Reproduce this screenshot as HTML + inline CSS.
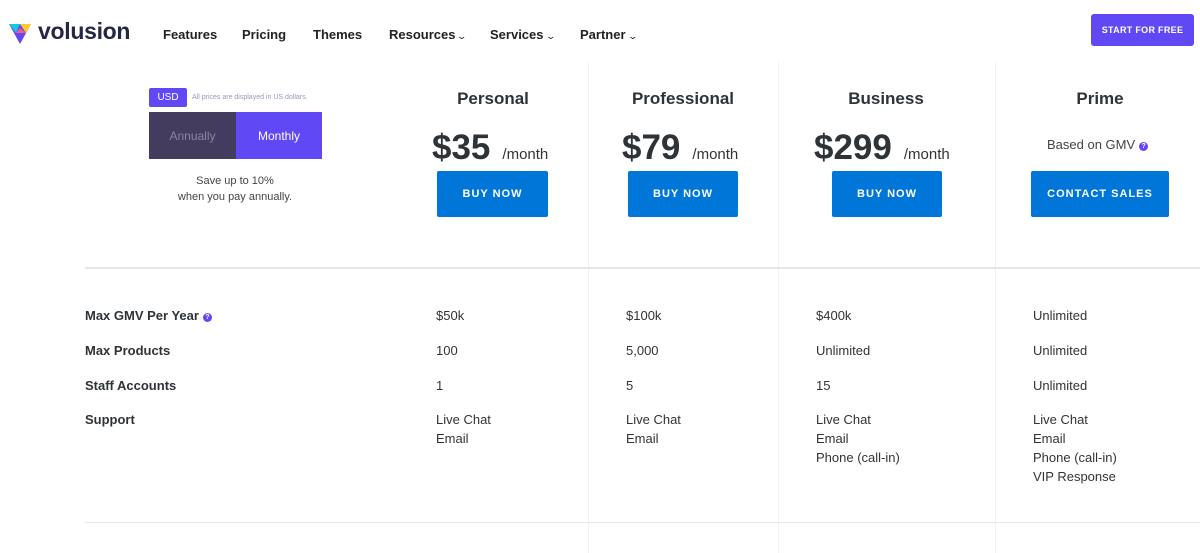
<!DOCTYPE html>
<html><head><meta charset="utf-8"><style>
*{margin:0;padding:0;box-sizing:border-box}
body{width:1200px;height:553px;overflow:hidden;background:#fff;font-family:"Liberation Sans",sans-serif;color:#2e3338;position:relative}
.a{position:absolute}
.nav{font-size:13px;font-weight:bold;color:#222;top:27px}
.nav i{font-style:normal;font-size:9px;font-weight:normal;margin-left:3px;display:inline-block;transform:scaleX(1.4)}
.vl{position:absolute;top:62px;bottom:0;width:1px;background:#f2f2f2}
.hl{position:absolute;left:85px;right:0;height:2px;background:#e6e6e6}
.tier{position:absolute;top:89px;font-size:17px;font-weight:bold;color:#2e3338;text-align:center;width:200px}
.price{position:absolute;top:128px;font-size:35px;font-weight:bold;color:#2e3338}
.mo{font-size:15px;font-weight:normal;margin-left:12px;color:#333}
.btn{position:absolute;top:171px;height:46px;background:#0176d9;color:#fff;font-size:11px;font-weight:bold;letter-spacing:1px;display:flex;align-items:center;justify-content:center;border-radius:2px}
.row{position:absolute;font-size:13px;color:#333;line-height:19px}
.lb{font-weight:bold;color:#2e3338;left:85px}
.q{display:inline-block;width:9px;height:9px;border-radius:50%;background:#6048f5;color:#fff;font-size:7px;text-align:center;line-height:9px;vertical-align:1px;margin-left:4px;font-weight:bold}
</style></head><body>
<svg class="a" style="left:8px;top:21px" width="24" height="24" viewBox="0 0 24 24"><polygon points="1,3 23,3 12,23" fill="#6048f5"/><polygon points="1,3 12,3 8,12" fill="#19c3e6"/><polygon points="12,3 23,3 18,12" fill="#ffc82c"/><polygon points="8,12 18,12 12,7" fill="#ff5a7a"/></svg>
<div class="a" style="left:38px;top:18px;font-size:23px;font-weight:bold;color:#262646;letter-spacing:-0.3px">volusion</div>
<div class="a nav" style="left:163px">Features</div>
<div class="a nav" style="left:242px">Pricing</div>
<div class="a nav" style="left:313px">Themes</div>
<div class="a nav" style="left:389px">Resources<i>⌄</i></div>
<div class="a nav" style="left:490px">Services<i>⌄</i></div>
<div class="a nav" style="left:580px">Partner<i>⌄</i></div>
<div class="a" style="left:1091px;top:14px;width:103px;height:32px;background:#6048f5;border-radius:3px;color:#fff;font-size:9px;font-weight:bold;display:flex;align-items:center;justify-content:center;letter-spacing:0.3px">START FOR FREE</div>

<div class="vl" style="left:588px"></div><div class="vl" style="left:778px"></div><div class="vl" style="left:995px"></div>
<div class="hl" style="top:267px"></div><div class="hl" style="top:522px;height:1px"></div>

<div class="a" style="left:149px;top:88px;width:38px;height:19px;background:#6048f5;color:#fff;font-size:10px;display:flex;align-items:center;justify-content:center;border-radius:2px">USD</div>
<div class="a" style="left:192px;top:94px;font-size:7px;color:#9a98b8">All prices are displayed in US dollars.</div>
<div class="a" style="left:149px;top:112px;width:87px;height:47px;background:#433c5e;color:#8a84a4;font-size:12px;display:flex;align-items:center;justify-content:center">Annually</div>
<div class="a" style="left:236px;top:112px;width:86px;height:47px;background:#6048f5;color:#fff;font-size:12px;display:flex;align-items:center;justify-content:center">Monthly</div>
<div class="a" style="left:135px;top:173px;width:200px;text-align:center;font-size:11px;line-height:16px;color:#444">Save up to 10%<br>when you pay annually.</div>

<div class="tier" style="left:393px">Personal</div>
<div class="tier" style="left:583px">Professional</div>
<div class="tier" style="left:786px">Business</div>
<div class="tier" style="left:1000px">Prime</div>
<div class="price" style="left:432px">$35<span class="mo">/month</span></div>
<div class="price" style="left:622px">$79<span class="mo">/month</span></div>
<div class="price" style="left:814px">$299<span class="mo">/month</span></div>
<div class="a" style="left:1047px;top:137px;font-size:13px;color:#444">Based on GMV<span class="q">?</span></div>
<div class="btn" style="left:437px;width:111px">BUY NOW</div>
<div class="btn" style="left:628px;width:110px">BUY NOW</div>
<div class="btn" style="left:832px;width:110px">BUY NOW</div>
<div class="btn" style="left:1031px;width:138px">CONTACT SALES</div>

<div class="row lb" style="top:306px">Max GMV Per Year<span class="q">?</span></div>
<div class="row lb" style="top:341px">Max Products</div>
<div class="row lb" style="top:376px">Staff Accounts</div>
<div class="row lb" style="top:410px">Support</div>
<div class="row" style="left:436px;top:306px">$50k</div>
<div class="row" style="left:436px;top:341px">100</div>
<div class="row" style="left:436px;top:376px">1</div>
<div class="row" style="left:436px;top:410px">Live Chat<br>Email</div>
<div class="row" style="left:626px;top:306px">$100k</div>
<div class="row" style="left:626px;top:341px">5,000</div>
<div class="row" style="left:626px;top:376px">5</div>
<div class="row" style="left:626px;top:410px">Live Chat<br>Email</div>
<div class="row" style="left:816px;top:306px">$400k</div>
<div class="row" style="left:816px;top:341px">Unlimited</div>
<div class="row" style="left:816px;top:376px">15</div>
<div class="row" style="left:816px;top:410px">Live Chat<br>Email<br>Phone (call-in)</div>
<div class="row" style="left:1033px;top:306px">Unlimited</div>
<div class="row" style="left:1033px;top:341px">Unlimited</div>
<div class="row" style="left:1033px;top:376px">Unlimited</div>
<div class="row" style="left:1033px;top:410px">Live Chat<br>Email<br>Phone (call-in)<br>VIP Response</div>
</body></html>
